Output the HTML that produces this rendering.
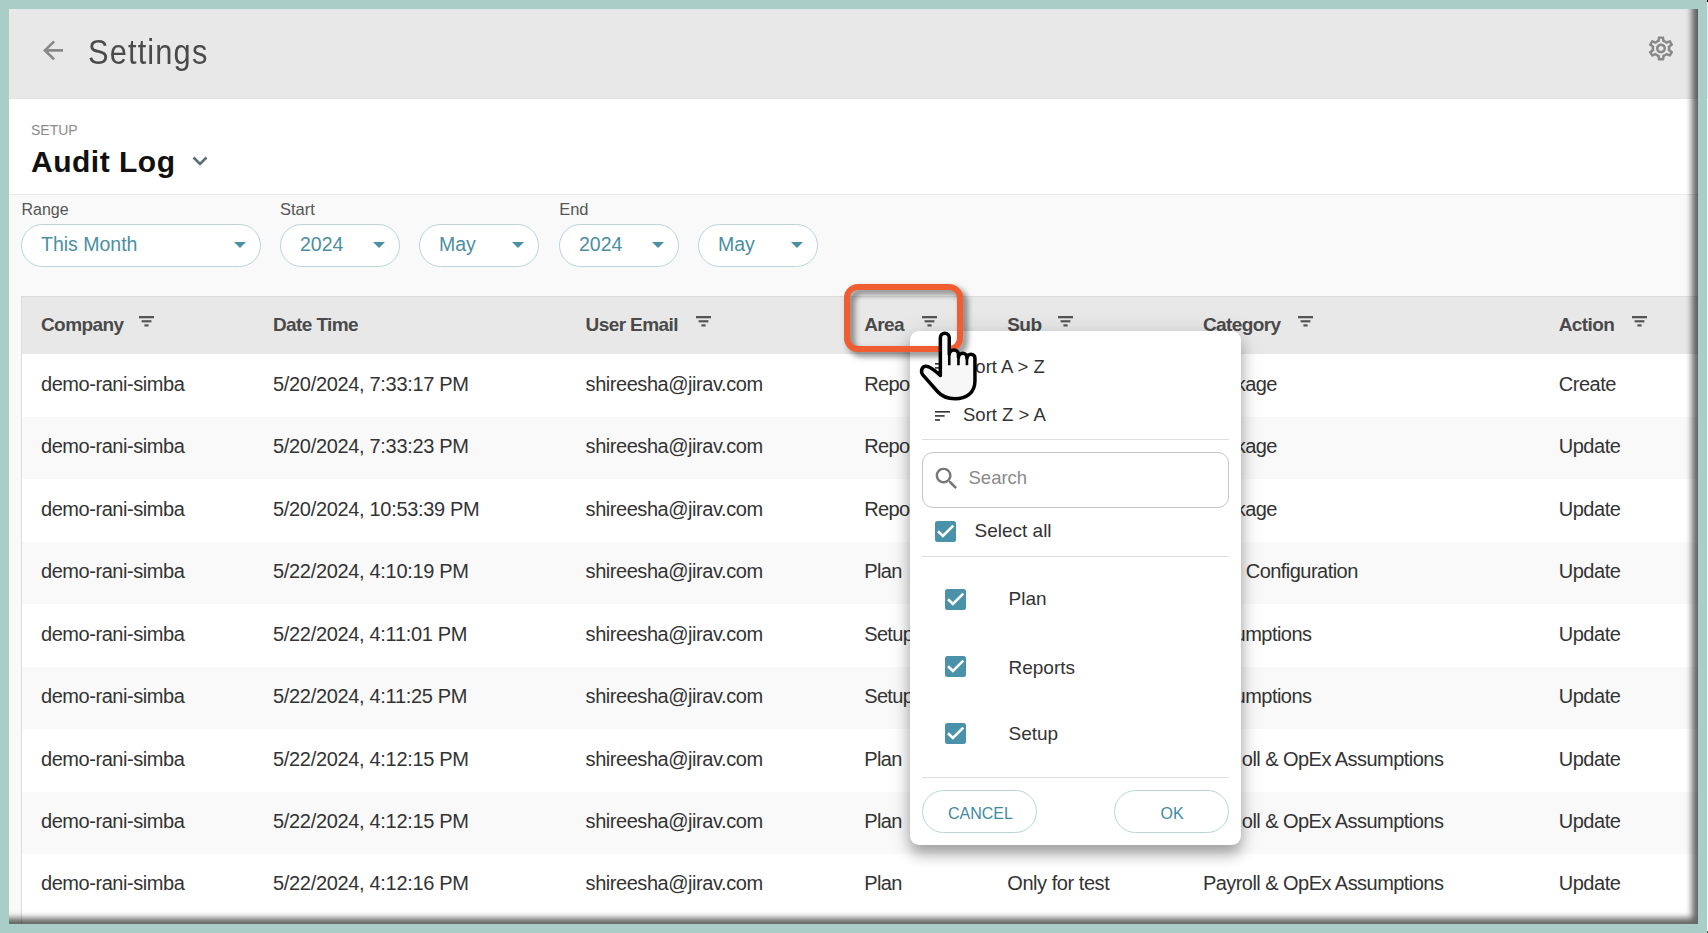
<!DOCTYPE html><html><head><meta charset="utf-8"><style>
*{margin:0;padding:0;box-sizing:border-box}
html,body{width:1708px;height:933px;overflow:hidden;background:#a9cec7;font-family:"Liberation Sans",sans-serif}
.t{position:absolute;line-height:1;white-space:pre}
.abs{position:absolute}
#app{position:absolute;left:9px;top:9px;width:1689px;height:915px;overflow:hidden;background:#f9f9f9}
</style></head><body><div id="app"><div class="abs" style="left:-9px;top:-9px;width:1708px;height:933px"><div class="abs" style="left:0;top:0;width:1708px;height:99px;background:#e8e8e8;border-bottom:1px solid #e4e4e4"></div><div class="abs" style="left:0;top:99px;width:1708px;height:96px;background:#fff;border-bottom:1px solid #ebebeb"></div><svg class="abs" style="left:0;top:0" width="80" height="80" viewBox="0 0 80 80"><path d="M63 50.4 H46 M54.1 41.4 L45 50.4 L54.1 59.4" stroke="#888" stroke-width="2.7" fill="none"/></svg><div class="t" style="left:87.50px;top:34.17px;font-size:35px;color:#4a4a4a;font-weight:400;letter-spacing:1.3px;transform:scaleX(0.88);transform-origin:0 0">Settings</div>
<svg class="abs" style="left:1646px;top:34.4px" width="30" height="28.8" viewBox="0 0 24 24" preserveAspectRatio="none"><path fill="#888" d="M19.43 12.98c.04-.32.07-.64.07-.98 0-.34-.03-.66-.07-.98l2.11-1.65c.19-.15.24-.42.12-.64l-2-3.46c-.09-.16-.26-.25-.44-.25-.06 0-.12.01-.17.03l-2.49 1c-.52-.4-1.08-.73-1.69-.98l-.38-2.65C14.46 2.18 14.25 2 14 2h-4c-.25 0-.46.18-.49.42l-.38 2.65c-.61.25-1.17.59-1.69.98l-2.49-1c-.06-.02-.12-.03-.18-.03-.17 0-.34.09-.43.25l-2 3.46c-.13.22-.07.49.12.64l2.11 1.65c-.04.32-.07.65-.07.98 0 .33.03.66.07.98l-2.11 1.65c-.19.15-.24.42-.12.64l2 3.46c.09.16.26.25.44.25.06 0 .12-.01.17-.03l2.49-1c.52.4 1.08.73 1.69.98l.38 2.65c.03.24.24.42.49.42h4c.25 0 .46-.18.49-.42l.38-2.65c.61-.25 1.17-.59 1.69-.98l2.49 1c.06.02.12.03.18.03.17 0 .34-.09.43-.25l2-3.46c.12-.22.07-.49-.12-.64l-2.11-1.65zm-1.98-1.71c.04.31.05.52.05.73 0 .21-.02.43-.05.73l-.14 1.13.89.7 1.08.84-.7 1.21-1.27-.51-1.04-.42-.9.68c-.43.32-.84.56-1.25.73l-1.06.43-.16 1.13-.2 1.35h-1.4l-.19-1.35-.16-1.13-1.06-.43c-.43-.18-.83-.41-1.23-.71l-.91-.7-1.06.43-1.27.51-.7-1.21 1.08-.84.89-.7-.14-1.13c-.03-.31-.05-.54-.05-.74s.02-.43.05-.73l.14-1.13-.89-.7-1.08-.84.7-1.21 1.27.51 1.04.42.9-.68c.43-.32.84-.56 1.25-.73l1.06-.43.16-1.13.2-1.35h1.39l.19 1.35.16 1.13 1.06.43c.43.18.83.41 1.23.71l.91.7 1.06-.43 1.27-.51.7 1.21-1.07.85-.89.7.14 1.13zM12 8c-2.21 0-4 1.79-4 4s1.79 4 4 4 4-1.79 4-4-1.79-4-4-4zm0 6c-1.1 0-2-.9-2-2s.9-2 2-2 2 .9 2 2-.9 2-2 2z"/></svg><div class="t" style="left:31.00px;top:123.15px;font-size:14px;color:#8a8a8a;font-weight:400;letter-spacing:0px">SETUP</div>
<div class="t" style="left:31.00px;top:147.30px;font-size:30px;color:#111;font-weight:700;letter-spacing:0.5px">Audit Log</div>
<svg class="abs" style="left:190px;top:152px" width="20" height="18" viewBox="0 0 20 18"><path d="M3.5 5.5 L10 12 L16.5 5.5" fill="none" stroke="#5b6b78" stroke-width="2.6"/></svg><div class="t" style="left:21.50px;top:201.96px;font-size:16px;color:#555;font-weight:400;">Range</div>
<div class="t" style="left:280.00px;top:200.63px;font-size:16.5px;color:#555;font-weight:400;">Start</div>
<div class="t" style="left:559.20px;top:200.63px;font-size:16.5px;color:#555;font-weight:400;">End</div>
<div class="abs" style="left:21px;top:224px;width:240px;height:43px;border:1px solid #bcd2d9;border-radius:22px;background:#fff"></div><div class="t" style="left:41.00px;top:235.49px;font-size:19.5px;color:#4a8fa3;font-weight:400;">This Month</div>
<svg class="abs" style="left:234px;top:242px" width="12" height="6" viewBox="0 0 12 6"><path d="M0 0h12L6 6z" fill="#4a8fa3"/></svg><div class="abs" style="left:280px;top:224px;width:120px;height:43px;border:1px solid #bcd2d9;border-radius:22px;background:#fff"></div><div class="t" style="left:300.00px;top:235.49px;font-size:19.5px;color:#4a8fa3;font-weight:400;">2024</div>
<svg class="abs" style="left:373px;top:242px" width="12" height="6" viewBox="0 0 12 6"><path d="M0 0h12L6 6z" fill="#4a8fa3"/></svg><div class="abs" style="left:419px;top:224px;width:120px;height:43px;border:1px solid #bcd2d9;border-radius:22px;background:#fff"></div><div class="t" style="left:439.00px;top:235.49px;font-size:19.5px;color:#4a8fa3;font-weight:400;">May</div>
<svg class="abs" style="left:512px;top:242px" width="12" height="6" viewBox="0 0 12 6"><path d="M0 0h12L6 6z" fill="#4a8fa3"/></svg><div class="abs" style="left:559px;top:224px;width:120px;height:43px;border:1px solid #bcd2d9;border-radius:22px;background:#fff"></div><div class="t" style="left:579.00px;top:235.49px;font-size:19.5px;color:#4a8fa3;font-weight:400;">2024</div>
<svg class="abs" style="left:652px;top:242px" width="12" height="6" viewBox="0 0 12 6"><path d="M0 0h12L6 6z" fill="#4a8fa3"/></svg><div class="abs" style="left:698px;top:224px;width:120px;height:43px;border:1px solid #bcd2d9;border-radius:22px;background:#fff"></div><div class="t" style="left:718.00px;top:235.49px;font-size:19.5px;color:#4a8fa3;font-weight:400;">May</div>
<svg class="abs" style="left:791px;top:242px" width="12" height="6" viewBox="0 0 12 6"><path d="M0 0h12L6 6z" fill="#4a8fa3"/></svg><div class="abs" style="left:21px;top:296px;width:1800px;height:700px;background:#fff;border-left:1px solid #dcdcdc;border-top:1px solid #dcdcdc"></div><div class="abs" style="left:22px;top:297px;width:1800px;height:57px;background:#e8e8e8"></div><div class="abs" style="left:22px;top:416.50px;width:1800px;height:62.50px;background:#f9f9f9"></div><div class="abs" style="left:22px;top:541.50px;width:1800px;height:62.50px;background:#f9f9f9"></div><div class="abs" style="left:22px;top:666.50px;width:1800px;height:62.50px;background:#f9f9f9"></div><div class="abs" style="left:22px;top:791.50px;width:1800px;height:62.50px;background:#f9f9f9"></div><div class="t" style="left:41.00px;top:314.92px;font-size:19px;color:#4a4a4a;font-weight:700;letter-spacing:-0.6px">Company</div>
<svg class="abs" style="left:139px;top:316px" width="15" height="11" viewBox="0 0 15 11"><rect x="0" y="0" width="15" height="2.3" fill="#555"/><rect x="2.6" y="4.2" width="9.8" height="2.2" fill="#555"/><rect x="5.4" y="8.3" width="4.2" height="2.2" fill="#555"/></svg><div class="t" style="left:273.00px;top:314.92px;font-size:19px;color:#4a4a4a;font-weight:700;letter-spacing:-0.6px">Date Time</div>
<div class="t" style="left:585.60px;top:314.92px;font-size:19px;color:#4a4a4a;font-weight:700;letter-spacing:-0.6px">User Email</div>
<svg class="abs" style="left:695.7px;top:316px" width="15" height="11" viewBox="0 0 15 11"><rect x="0" y="0" width="15" height="2.3" fill="#555"/><rect x="2.6" y="4.2" width="9.8" height="2.2" fill="#555"/><rect x="5.4" y="8.3" width="4.2" height="2.2" fill="#555"/></svg><div class="t" style="left:864.20px;top:314.92px;font-size:19px;color:#4a4a4a;font-weight:700;letter-spacing:-0.6px">Area</div>
<svg class="abs" style="left:921.5px;top:316px" width="15" height="11" viewBox="0 0 15 11"><rect x="0" y="0" width="15" height="2.3" fill="#555"/><rect x="2.6" y="4.2" width="9.8" height="2.2" fill="#555"/><rect x="5.4" y="8.3" width="4.2" height="2.2" fill="#555"/></svg><div class="t" style="left:1007.30px;top:314.92px;font-size:19px;color:#4a4a4a;font-weight:700;letter-spacing:-0.6px">Sub</div>
<svg class="abs" style="left:1057.7px;top:316px" width="15" height="11" viewBox="0 0 15 11"><rect x="0" y="0" width="15" height="2.3" fill="#555"/><rect x="2.6" y="4.2" width="9.8" height="2.2" fill="#555"/><rect x="5.4" y="8.3" width="4.2" height="2.2" fill="#555"/></svg><div class="t" style="left:1202.90px;top:314.92px;font-size:19px;color:#4a4a4a;font-weight:700;letter-spacing:-0.6px">Category</div>
<svg class="abs" style="left:1298px;top:316px" width="15" height="11" viewBox="0 0 15 11"><rect x="0" y="0" width="15" height="2.3" fill="#555"/><rect x="2.6" y="4.2" width="9.8" height="2.2" fill="#555"/><rect x="5.4" y="8.3" width="4.2" height="2.2" fill="#555"/></svg><div class="t" style="left:1558.70px;top:314.92px;font-size:19px;color:#4a4a4a;font-weight:700;letter-spacing:-0.6px">Action</div>
<svg class="abs" style="left:1632px;top:316px" width="15" height="11" viewBox="0 0 15 11"><rect x="0" y="0" width="15" height="2.3" fill="#555"/><rect x="2.6" y="4.2" width="9.8" height="2.2" fill="#555"/><rect x="5.4" y="8.3" width="4.2" height="2.2" fill="#555"/></svg><div class="t" style="left:41.00px;top:373.97px;font-size:20px;color:#333;font-weight:400;letter-spacing:-0.45px">demo-rani-simba</div>
<div class="t" style="left:273.00px;top:373.97px;font-size:20px;color:#333;font-weight:400;letter-spacing:-0.32px">5/20/2024, 7:33:17 PM</div>
<div class="t" style="left:585.60px;top:373.97px;font-size:20px;color:#333;font-weight:400;letter-spacing:-0.45px">shireesha@jirav.com</div>
<div class="t" style="left:864.20px;top:373.97px;font-size:20px;color:#333;font-weight:400;letter-spacing:-0.65px">Reports</div>
<div class="t" style="left:1202.90px;top:373.97px;font-size:20px;color:#333;font-weight:400;letter-spacing:-0.54px">Package</div>
<div class="t" style="left:1558.70px;top:373.97px;font-size:20px;color:#333;font-weight:400;letter-spacing:-0.45px">Create</div>
<div class="t" style="left:41.00px;top:436.47px;font-size:20px;color:#333;font-weight:400;letter-spacing:-0.45px">demo-rani-simba</div>
<div class="t" style="left:273.00px;top:436.47px;font-size:20px;color:#333;font-weight:400;letter-spacing:-0.32px">5/20/2024, 7:33:23 PM</div>
<div class="t" style="left:585.60px;top:436.47px;font-size:20px;color:#333;font-weight:400;letter-spacing:-0.45px">shireesha@jirav.com</div>
<div class="t" style="left:864.20px;top:436.47px;font-size:20px;color:#333;font-weight:400;letter-spacing:-0.65px">Reports</div>
<div class="t" style="left:1202.90px;top:436.47px;font-size:20px;color:#333;font-weight:400;letter-spacing:-0.54px">Package</div>
<div class="t" style="left:1558.70px;top:436.47px;font-size:20px;color:#333;font-weight:400;letter-spacing:-0.45px">Update</div>
<div class="t" style="left:41.00px;top:498.97px;font-size:20px;color:#333;font-weight:400;letter-spacing:-0.45px">demo-rani-simba</div>
<div class="t" style="left:273.00px;top:498.97px;font-size:20px;color:#333;font-weight:400;letter-spacing:-0.32px">5/20/2024, 10:53:39 PM</div>
<div class="t" style="left:585.60px;top:498.97px;font-size:20px;color:#333;font-weight:400;letter-spacing:-0.45px">shireesha@jirav.com</div>
<div class="t" style="left:864.20px;top:498.97px;font-size:20px;color:#333;font-weight:400;letter-spacing:-0.65px">Reports</div>
<div class="t" style="left:1202.90px;top:498.97px;font-size:20px;color:#333;font-weight:400;letter-spacing:-0.54px">Package</div>
<div class="t" style="left:1558.70px;top:498.97px;font-size:20px;color:#333;font-weight:400;letter-spacing:-0.45px">Update</div>
<div class="t" style="left:41.00px;top:561.47px;font-size:20px;color:#333;font-weight:400;letter-spacing:-0.45px">demo-rani-simba</div>
<div class="t" style="left:273.00px;top:561.47px;font-size:20px;color:#333;font-weight:400;letter-spacing:-0.32px">5/22/2024, 4:10:19 PM</div>
<div class="t" style="left:585.60px;top:561.47px;font-size:20px;color:#333;font-weight:400;letter-spacing:-0.45px">shireesha@jirav.com</div>
<div class="t" style="left:864.20px;top:561.47px;font-size:20px;color:#333;font-weight:400;letter-spacing:-0.65px">Plan</div>
<div class="t" style="left:1202.90px;top:561.47px;font-size:20px;color:#333;font-weight:400;letter-spacing:-0.54px">Plan Configuration</div>
<div class="t" style="left:1558.70px;top:561.47px;font-size:20px;color:#333;font-weight:400;letter-spacing:-0.45px">Update</div>
<div class="t" style="left:41.00px;top:623.97px;font-size:20px;color:#333;font-weight:400;letter-spacing:-0.45px">demo-rani-simba</div>
<div class="t" style="left:273.00px;top:623.97px;font-size:20px;color:#333;font-weight:400;letter-spacing:-0.32px">5/22/2024, 4:11:01 PM</div>
<div class="t" style="left:585.60px;top:623.97px;font-size:20px;color:#333;font-weight:400;letter-spacing:-0.45px">shireesha@jirav.com</div>
<div class="t" style="left:864.20px;top:623.97px;font-size:20px;color:#333;font-weight:400;letter-spacing:-0.65px">Setup</div>
<div class="t" style="left:1202.90px;top:623.97px;font-size:20px;color:#333;font-weight:400;letter-spacing:-0.54px">Assumptions</div>
<div class="t" style="left:1558.70px;top:623.97px;font-size:20px;color:#333;font-weight:400;letter-spacing:-0.45px">Update</div>
<div class="t" style="left:41.00px;top:686.47px;font-size:20px;color:#333;font-weight:400;letter-spacing:-0.45px">demo-rani-simba</div>
<div class="t" style="left:273.00px;top:686.47px;font-size:20px;color:#333;font-weight:400;letter-spacing:-0.32px">5/22/2024, 4:11:25 PM</div>
<div class="t" style="left:585.60px;top:686.47px;font-size:20px;color:#333;font-weight:400;letter-spacing:-0.45px">shireesha@jirav.com</div>
<div class="t" style="left:864.20px;top:686.47px;font-size:20px;color:#333;font-weight:400;letter-spacing:-0.65px">Setup</div>
<div class="t" style="left:1202.90px;top:686.47px;font-size:20px;color:#333;font-weight:400;letter-spacing:-0.54px">Assumptions</div>
<div class="t" style="left:1558.70px;top:686.47px;font-size:20px;color:#333;font-weight:400;letter-spacing:-0.45px">Update</div>
<div class="t" style="left:41.00px;top:748.97px;font-size:20px;color:#333;font-weight:400;letter-spacing:-0.45px">demo-rani-simba</div>
<div class="t" style="left:273.00px;top:748.97px;font-size:20px;color:#333;font-weight:400;letter-spacing:-0.32px">5/22/2024, 4:12:15 PM</div>
<div class="t" style="left:585.60px;top:748.97px;font-size:20px;color:#333;font-weight:400;letter-spacing:-0.45px">shireesha@jirav.com</div>
<div class="t" style="left:864.20px;top:748.97px;font-size:20px;color:#333;font-weight:400;letter-spacing:-0.65px">Plan</div>
<div class="t" style="left:1241.80px;top:748.97px;font-size:20px;color:#333;font-weight:400;letter-spacing:-0.54px">oll &amp; OpEx Assumptions</div>
<div class="t" style="left:1558.70px;top:748.97px;font-size:20px;color:#333;font-weight:400;letter-spacing:-0.45px">Update</div>
<div class="t" style="left:41.00px;top:811.47px;font-size:20px;color:#333;font-weight:400;letter-spacing:-0.45px">demo-rani-simba</div>
<div class="t" style="left:273.00px;top:811.47px;font-size:20px;color:#333;font-weight:400;letter-spacing:-0.32px">5/22/2024, 4:12:15 PM</div>
<div class="t" style="left:585.60px;top:811.47px;font-size:20px;color:#333;font-weight:400;letter-spacing:-0.45px">shireesha@jirav.com</div>
<div class="t" style="left:864.20px;top:811.47px;font-size:20px;color:#333;font-weight:400;letter-spacing:-0.65px">Plan</div>
<div class="t" style="left:1241.80px;top:811.47px;font-size:20px;color:#333;font-weight:400;letter-spacing:-0.54px">oll &amp; OpEx Assumptions</div>
<div class="t" style="left:1558.70px;top:811.47px;font-size:20px;color:#333;font-weight:400;letter-spacing:-0.45px">Update</div>
<div class="t" style="left:41.00px;top:872.97px;font-size:20px;color:#333;font-weight:400;letter-spacing:-0.45px">demo-rani-simba</div>
<div class="t" style="left:273.00px;top:872.97px;font-size:20px;color:#333;font-weight:400;letter-spacing:-0.32px">5/22/2024, 4:12:16 PM</div>
<div class="t" style="left:585.60px;top:872.97px;font-size:20px;color:#333;font-weight:400;letter-spacing:-0.45px">shireesha@jirav.com</div>
<div class="t" style="left:864.20px;top:872.97px;font-size:20px;color:#333;font-weight:400;letter-spacing:-0.65px">Plan</div>
<div class="t" style="left:1007.30px;top:872.97px;font-size:20px;color:#333;font-weight:400;letter-spacing:-0.45px">Only for test</div>
<div class="t" style="left:1202.90px;top:872.97px;font-size:20px;color:#333;font-weight:400;letter-spacing:-0.54px">Payroll &amp; OpEx Assumptions</div>
<div class="t" style="left:1558.70px;top:872.97px;font-size:20px;color:#333;font-weight:400;letter-spacing:-0.45px">Update</div>
<div class="abs" style="left:910px;top:331px;width:331px;height:514px;background:#fff;border-radius:9px;box-shadow:0 9px 14px rgba(0,0,0,.3),0 3px 26px rgba(0,0,0,.12)"></div><svg class="abs" style="left:935px;top:362.8px" width="15" height="10" viewBox="0 0 15 10"><rect x="0" y="0" width="5" height="1.6" fill="#333"/><rect x="0" y="4.1" width="9.6" height="1.6" fill="#333"/><rect x="0" y="8.2" width="15" height="1.6" fill="#333"/></svg><div class="t" style="left:963.00px;top:357.94px;font-size:18.5px;color:#333;font-weight:400;">Sort A &gt; Z</div>
<svg class="abs" style="left:935px;top:410.6px" width="15" height="10" viewBox="0 0 15 10"><rect x="0" y="0" width="15" height="1.6" fill="#333"/><rect x="0" y="4.1" width="9.6" height="1.6" fill="#333"/><rect x="0" y="8.2" width="5" height="1.6" fill="#333"/></svg><div class="t" style="left:963.00px;top:405.74px;font-size:18.5px;color:#333;font-weight:400;">Sort Z &gt; A</div>
<div class="abs" style="left:922px;top:439px;width:307px;height:1px;background:#dedede"></div><div class="abs" style="left:922px;top:452px;width:307px;height:56px;border:1px solid #c6c6c6;border-radius:11px"></div><svg class="abs" style="left:932.3px;top:464.1px" width="29.3" height="29.3" viewBox="0 0 24 24"><path fill="#777" d="M15.5 14h-.79l-.28-.27C15.41 12.59 16 11.11 16 9.5 16 5.91 13.09 3 9.5 3S3 5.91 3 9.5 5.91 16 9.5 16c1.61 0 3.09-.59 4.23-1.57l.27.28v.79l5 4.99L20.49 19l-4.99-5zm-6 0C7.01 14 5 11.99 5 9.5S7.01 5 9.5 5 14 7.01 14 9.5 11.99 14 9.5 14z"/></svg><div class="t" style="left:968.50px;top:469.04px;font-size:18.5px;color:#8a8a8a;font-weight:400;">Search</div>
<svg class="abs" style="left:934.8px;top:521px" width="21" height="21" viewBox="0 0 21 21"><rect x="0" y="0" width="21" height="21" rx="2.5" fill="#4a92a9"/><path d="M3 10.2 L7.9 15 L18.3 4.6" fill="none" stroke="#fff" stroke-width="2.6"/></svg><div class="t" style="left:974.50px;top:520.82px;font-size:19px;color:#333;font-weight:400;">Select all</div>
<div class="abs" style="left:922px;top:556px;width:307px;height:1px;background:#dedede"></div><svg class="abs" style="left:945px;top:589.2px" width="21" height="21" viewBox="0 0 21 21"><rect x="0" y="0" width="21" height="21" rx="2.5" fill="#4a92a9"/><path d="M3 10.2 L7.9 15 L18.3 4.6" fill="none" stroke="#fff" stroke-width="2.6"/></svg><div class="t" style="left:1008.50px;top:588.82px;font-size:19px;color:#333;font-weight:400;">Plan</div>
<svg class="abs" style="left:945px;top:656.2px" width="21" height="21" viewBox="0 0 21 21"><rect x="0" y="0" width="21" height="21" rx="2.5" fill="#4a92a9"/><path d="M3 10.2 L7.9 15 L18.3 4.6" fill="none" stroke="#fff" stroke-width="2.6"/></svg><div class="t" style="left:1008.50px;top:657.82px;font-size:19px;color:#333;font-weight:400;">Reports</div>
<svg class="abs" style="left:945px;top:723.4px" width="21" height="21" viewBox="0 0 21 21"><rect x="0" y="0" width="21" height="21" rx="2.5" fill="#4a92a9"/><path d="M3 10.2 L7.9 15 L18.3 4.6" fill="none" stroke="#fff" stroke-width="2.6"/></svg><div class="t" style="left:1008.50px;top:724.12px;font-size:19px;color:#333;font-weight:400;">Setup</div>
<div class="abs" style="left:922px;top:777px;width:307px;height:1px;background:#dedede"></div><div class="abs" style="left:922px;top:790px;width:115px;height:43px;border:1px solid #bcd2d9;border-radius:22px"></div><div class="t" style="left:948.00px;top:805.66px;font-size:16px;color:#3f8aa1;font-weight:400;">CANCEL</div>
<div class="abs" style="left:1114px;top:790px;width:115px;height:43px;border:1px solid #bcd2d9;border-radius:22px"></div><div class="t" style="left:1160.50px;top:805.66px;font-size:16px;color:#3f8aa1;font-weight:400;">OK</div>
<div class="abs" style="left:844px;top:284px;width:119px;height:68px;border:6px solid #f05d30;border-radius:14px;filter:drop-shadow(4px 4px 3px rgba(0,0,0,.55))"></div><svg class="abs" style="left:0;top:0" width="1708" height="933" viewBox="0 0 1708 933"><path d="M940.35,375.5 L940.35,337.6 A4.45,4.45 0 0 1 949.25,337.6 L949.25,354.55 A4.6,4.6 0 0 1 958.45,354.55 L958.45,357.6 A4.25,4.25 0 0 1 966.95,357.6 L966.95,358.15 A4,4 0 0 1 974.95,358.15 L974.95,381 C974.95,393 966,398.75 955,398.75 C947,398.75 941,395.5 937.5,391.5 L922.8,374.8 C920.5,372 921.5,366.5 925.5,366.2 C929,366 933,368.5 940.35,375.5 Z" fill="#f7f7f7" stroke="#000" stroke-width="3.5" stroke-linejoin="round"/><path d="M949.25,353 V365.3 M958.45,356 V365.3 M966.95,357 V365.3" stroke="#000" stroke-width="2.6"/></svg></div><div class="abs" style="left:0;top:0;width:1689px;height:915px;box-shadow:inset -8px -8px 6px -2px rgba(0,0,0,.6)"></div></div><div class="abs" style="left:1707px;top:0;width:1px;height:933px;background:linear-gradient(#000 0,#000 2px,#e8e8e8 2px,#e8e8e8 99px,#fff 99px,#fff 931px,#6b4a2a 931px)"></div></body></html>
